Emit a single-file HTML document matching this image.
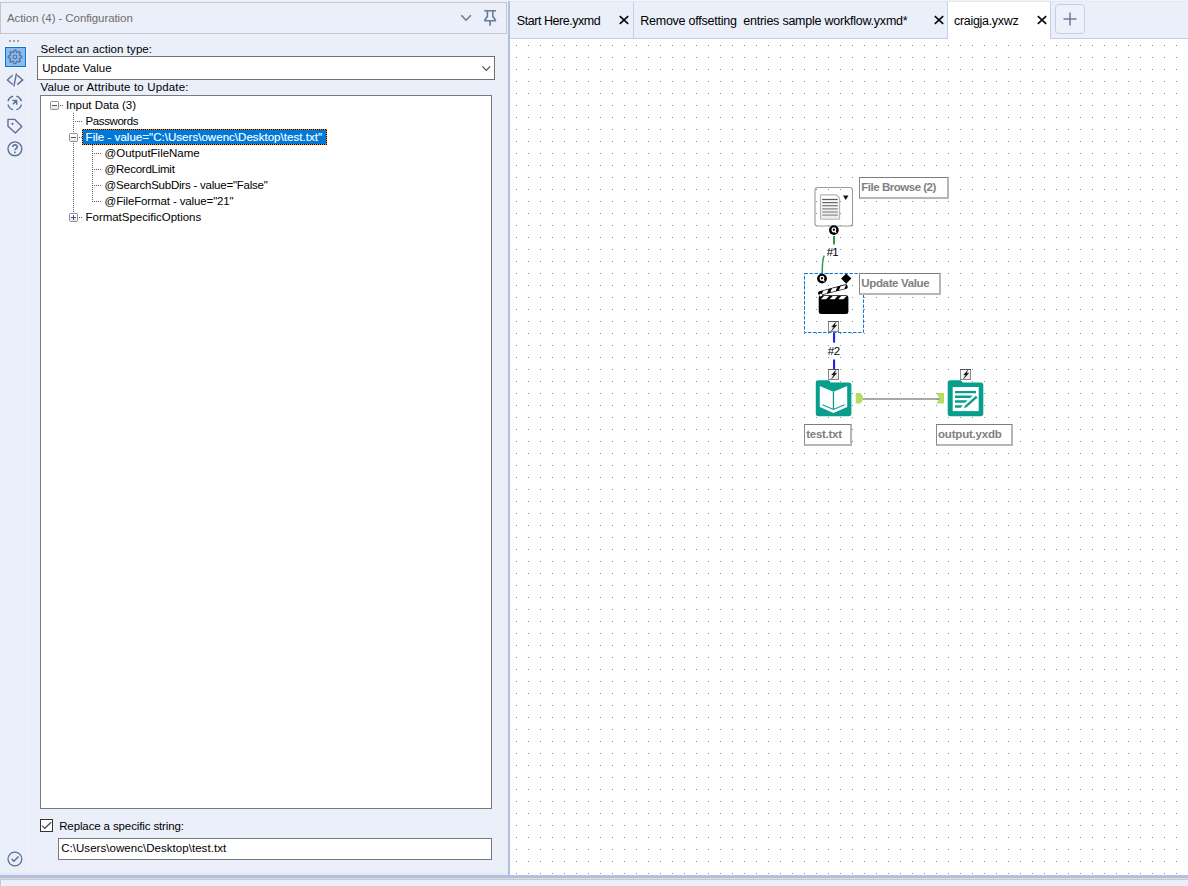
<!DOCTYPE html>
<html><head><meta charset="utf-8"><title>Alteryx</title><style>
html,body{margin:0;padding:0}
body{width:1188px;height:886px;position:relative;overflow:hidden;background:#ebeffa;font-family:'Liberation Sans',sans-serif;}
.a{position:absolute;box-sizing:border-box}
.t{position:absolute;white-space:pre;line-height:16px;height:16px;font-family:'Liberation Sans',sans-serif}
svg{position:absolute;overflow:visible}
</style></head><body>
<div class="a" style="left:0px;top:0px;width:1188px;height:1px;background:#f0f2f8"></div>
<div class="a" style="left:0px;top:2px;width:507px;height:32px;border:1px solid #c6c6c6;border-right-color:#c6c6c6;background:#ebeffa"></div>
<div class="t" style="left:7.00px;top:10.02px;font-size:11.5px;font-weight:400;color:#6d6d6d;letter-spacing:-0.082px;">Action (4) - Configuration</div>
<div class="a" style="left:27px;top:40px;width:1px;height:831px;background:#f3f5fb"></div>
<div class="a" style="left:5px;top:47px;width:21px;height:20px;border:1px solid #0078d7;background:#88bdee"></div>
<div class="a" style="left:9px;top:40px;width:2px;height:2px;background:#a3a3a3"></div>
<div class="a" style="left:13px;top:40px;width:2px;height:2px;background:#a3a3a3"></div>
<div class="a" style="left:17px;top:40px;width:2px;height:2px;background:#a3a3a3"></div>
<div class="t" style="left:40.60px;top:41.02px;font-size:11.5px;font-weight:400;color:#000;letter-spacing:0.070px;">Select an action type:</div>
<div class="a" style="left:37px;top:56px;width:458px;height:24px;border:1px solid #707070;background:#fff"></div>
<div class="t" style="left:42.20px;top:60.02px;font-size:11.5px;font-weight:400;color:#000;letter-spacing:0.055px;">Update Value</div>
<div class="t" style="left:40.60px;top:79.02px;font-size:11.5px;font-weight:400;color:#000;letter-spacing:0.150px;">Value or Attribute to Update:</div>
<div class="a" style="left:40px;top:95px;width:452px;height:714px;border:1px solid #7a7a7a;background:#fff"></div>
<div class="a" style="left:82px;top:129px;width:245px;height:16px;background:#0078d7"></div>
<div class="a" style="left:82px;top:129px;width:245px;height:1px;background:repeating-linear-gradient(to right,#ff8a2a 0 1px,#000 1px 2px)"></div>
<div class="a" style="left:82px;top:144px;width:245px;height:1px;background:repeating-linear-gradient(to right,#000 0 1px,#ff8a2a 1px 2px)"></div>
<div class="a" style="left:82px;top:129px;width:1px;height:16px;background:repeating-linear-gradient(to bottom,#ff8a2a 0 1px,#000 1px 2px)"></div>
<div class="a" style="left:326px;top:129px;width:1px;height:16px;background:repeating-linear-gradient(to bottom,#ff8a2a 0 1px,#000 1px 2px)"></div>
<div class="t" style="left:66.00px;top:97.02px;font-size:11.5px;font-weight:400;color:#000;letter-spacing:-0.023px;">Input Data (3)</div>
<div class="t" style="left:85.60px;top:113.02px;font-size:11.5px;font-weight:400;color:#000;letter-spacing:-0.417px;">Passwords</div>
<div class="t" style="left:85.60px;top:129.02px;font-size:11.5px;font-weight:400;color:#fff;letter-spacing:0.038px;-webkit-text-stroke:0.12px #fff;">File - value=&quot;C:\Users\owenc\Desktop\test.txt&quot;</div>
<div class="t" style="left:104.60px;top:145.02px;font-size:11.5px;font-weight:400;color:#000;letter-spacing:-0.027px;">@OutputFileName</div>
<div class="t" style="left:104.60px;top:161.02px;font-size:11.5px;font-weight:400;color:#000;letter-spacing:-0.253px;">@RecordLimit</div>
<div class="t" style="left:104.60px;top:177.02px;font-size:11.5px;font-weight:400;color:#000;letter-spacing:-0.224px;">@SearchSubDirs - value=&quot;False&quot;</div>
<div class="t" style="left:104.60px;top:193.02px;font-size:11.5px;font-weight:400;color:#000;letter-spacing:-0.126px;">@FileFormat - value=&quot;21&quot;</div>
<div class="t" style="left:85.60px;top:209.02px;font-size:11.5px;font-weight:400;color:#000;letter-spacing:-0.039px;">FormatSpecificOptions</div>
<div class="a" style="left:60px;top:105px;width:3px;height:1px;background:repeating-linear-gradient(to right,#5e5e5e 0 1px,transparent 1px 2px)"></div>
<div class="a" style="left:73px;top:113px;width:1px;height:19px;background:repeating-linear-gradient(to bottom,#5e5e5e 0 1px,transparent 1px 2px)"></div>
<div class="a" style="left:73px;top:143px;width:1px;height:69px;background:repeating-linear-gradient(to bottom,#5e5e5e 0 1px,transparent 1px 2px)"></div>
<div class="a" style="left:73px;top:121px;width:9px;height:1px;background:repeating-linear-gradient(to right,#5e5e5e 0 1px,transparent 1px 2px)"></div>
<div class="a" style="left:79px;top:137px;width:3px;height:1px;background:repeating-linear-gradient(to right,#5e5e5e 0 1px,transparent 1px 2px)"></div>
<div class="a" style="left:79px;top:217px;width:3px;height:1px;background:repeating-linear-gradient(to right,#5e5e5e 0 1px,transparent 1px 2px)"></div>
<div class="a" style="left:92px;top:145px;width:1px;height:57px;background:repeating-linear-gradient(to bottom,#5e5e5e 0 1px,transparent 1px 2px)"></div>
<div class="a" style="left:92px;top:153px;width:9px;height:1px;background:repeating-linear-gradient(to right,#5e5e5e 0 1px,transparent 1px 2px)"></div>
<div class="a" style="left:92px;top:169px;width:9px;height:1px;background:repeating-linear-gradient(to right,#5e5e5e 0 1px,transparent 1px 2px)"></div>
<div class="a" style="left:92px;top:185px;width:9px;height:1px;background:repeating-linear-gradient(to right,#5e5e5e 0 1px,transparent 1px 2px)"></div>
<div class="a" style="left:92px;top:201px;width:9px;height:1px;background:repeating-linear-gradient(to right,#5e5e5e 0 1px,transparent 1px 2px)"></div>
<div class="a" style="left:50px;top:101px;width:9px;height:9px;border:1px solid #919191;border-radius:1.5px;background:linear-gradient(to bottom,#fff 0%,#fbfbfb 45%,#e4e2dc 100%)"></div><div class="a" style="left:52px;top:105px;width:5px;height:1px;background:#3f50a6"></div>
<div class="a" style="left:69px;top:133px;width:9px;height:9px;border:1px solid #919191;border-radius:1.5px;background:linear-gradient(to bottom,#fff 0%,#fbfbfb 45%,#e4e2dc 100%)"></div><div class="a" style="left:71px;top:137px;width:5px;height:1px;background:#3f50a6"></div>
<div class="a" style="left:69px;top:213px;width:9px;height:9px;border:1px solid #919191;border-radius:1.5px;background:linear-gradient(to bottom,#fff 0%,#fbfbfb 45%,#e4e2dc 100%)"></div><div class="a" style="left:71px;top:217px;width:5px;height:1px;background:#3f50a6"></div><div class="a" style="left:73px;top:215px;width:1px;height:5px;background:#3f50a6"></div>
<div class="a" style="left:40px;top:819px;width:13px;height:13px;border:1px solid #333;background:#fff"></div>
<svg class="a" style="left:40px;top:819px" width="13" height="13"><path d="M2.2 6.6 L4.8 9.3 L11.2 3.2" fill="none" stroke="#4a4a4a" stroke-width="1.2"/></svg>
<div class="t" style="left:59.20px;top:818.02px;font-size:11.5px;font-weight:400;color:#000;letter-spacing:-0.121px;">Replace a specific string:</div>
<div class="a" style="left:58px;top:838px;width:434px;height:22px;border:1px solid #7a7a7a;background:#fff"></div>
<div class="t" style="left:61.20px;top:840.02px;font-size:11.5px;font-weight:400;color:#000;letter-spacing:0.044px;">C:\Users\owenc\Desktop\test.txt</div>
<svg class="a" style="left:0;top:0" width="1188" height="886" ><rect x="4.5" y="46.5" width="22" height="21" fill="none" stroke="#f4f6fb" stroke-width="1"/><path d="M15.00 50.13 L15.27 50.14 L15.53 50.15 L15.80 50.18 L16.00 50.59 L16.14 51.16 L16.24 51.74 L16.34 52.16 L16.52 52.21 L16.71 52.27 L16.89 52.35 L17.06 52.42 L17.24 52.51 L17.41 52.60 L17.77 52.37 L18.25 52.04 L18.76 51.73 L19.19 51.58 L19.40 51.75 L19.60 51.93 L19.79 52.11 L19.97 52.30 L20.15 52.50 L20.32 52.71 L20.17 53.14 L19.86 53.65 L19.53 54.13 L19.30 54.49 L19.39 54.66 L19.48 54.84 L19.55 55.01 L19.63 55.19 L19.69 55.38 L19.74 55.56 L20.16 55.66 L20.74 55.76 L21.31 55.90 L21.72 56.10 L21.75 56.37 L21.76 56.63 L21.77 56.90 L21.76 57.17 L21.75 57.43 L21.72 57.70 L21.31 57.90 L20.74 58.04 L20.16 58.14 L19.74 58.24 L19.69 58.42 L19.63 58.61 L19.55 58.79 L19.48 58.96 L19.39 59.14 L19.30 59.31 L19.53 59.67 L19.86 60.15 L20.17 60.66 L20.32 61.09 L20.15 61.30 L19.97 61.50 L19.79 61.69 L19.60 61.87 L19.40 62.05 L19.19 62.22 L18.76 62.07 L18.25 61.76 L17.77 61.43 L17.41 61.20 L17.24 61.29 L17.06 61.38 L16.89 61.45 L16.71 61.53 L16.52 61.59 L16.34 61.64 L16.24 62.06 L16.14 62.64 L16.00 63.21 L15.80 63.62 L15.53 63.65 L15.27 63.66 L15.00 63.67 L14.73 63.66 L14.47 63.65 L14.20 63.62 L14.00 63.21 L13.86 62.64 L13.76 62.06 L13.66 61.64 L13.48 61.59 L13.29 61.53 L13.11 61.45 L12.94 61.38 L12.76 61.29 L12.59 61.20 L12.23 61.43 L11.75 61.76 L11.24 62.07 L10.81 62.22 L10.60 62.05 L10.40 61.87 L10.21 61.69 L10.03 61.50 L9.85 61.30 L9.68 61.09 L9.83 60.66 L10.14 60.15 L10.47 59.67 L10.70 59.31 L10.61 59.14 L10.52 58.96 L10.45 58.79 L10.37 58.61 L10.31 58.42 L10.26 58.24 L9.84 58.14 L9.26 58.04 L8.69 57.90 L8.28 57.70 L8.25 57.43 L8.24 57.17 L8.23 56.90 L8.24 56.63 L8.25 56.37 L8.28 56.10 L8.69 55.90 L9.26 55.76 L9.84 55.66 L10.26 55.56 L10.31 55.38 L10.37 55.19 L10.45 55.01 L10.52 54.84 L10.61 54.66 L10.70 54.49 L10.47 54.13 L10.14 53.65 L9.83 53.14 L9.68 52.71 L9.85 52.50 L10.03 52.30 L10.21 52.11 L10.40 51.93 L10.60 51.75 L10.81 51.58 L11.24 51.73 L11.75 52.04 L12.23 52.37 L12.59 52.60 L12.76 52.51 L12.94 52.42 L13.11 52.35 L13.29 52.27 L13.48 52.21 L13.66 52.16 L13.76 51.74 L13.86 51.16 L14.00 50.59 L14.20 50.18 L14.47 50.15 L14.73 50.14 Z" fill="none" stroke="#58709c" stroke-width="1.25" stroke-linejoin="round"/><circle cx="15.0" cy="56.9" r="1.9" fill="none" stroke="#58709c" stroke-width="1.15"/><path d="M12.7 75.3 L7.4 79.9 L12.7 84.6 M17.3 75.3 L22.7 79.9 L17.3 84.6 M16.5 73.4 L13.8 86.5" fill="none" stroke="#5d6f97" stroke-width="1.4"/><path d="M16.37 96.20 A6.9 6.9 0 0 1 21.40 101.23 M21.40 104.57 A6.9 6.9 0 0 1 16.37 109.60 M13.03 109.60 A6.9 6.9 0 0 1 8.00 104.57 M8.00 101.23 A6.9 6.9 0 0 1 13.03 96.20" fill="none" stroke="#5d6f97" stroke-width="1.4"/><path d="M12.4 100.5 H16.6 V104.8 M16.4 100.7 L12.9 104.3" fill="none" stroke="#5d6f97" stroke-width="1.4"/><path d="M8 119.4 H14.8 L21.8 126.6 L15.4 133.0 L8 126.2 Z" fill="none" stroke="#5d6f97" stroke-width="1.4" stroke-linejoin="round"/><circle cx="12.5" cy="123.8" r="1.15" fill="#5d6f97"/><circle cx="14.9" cy="148.8" r="6.9" fill="none" stroke="#5d6f97" stroke-width="1.4"/><path d="M12.7 146.9 C12.7 144.2 17.3 144.3 17.2 146.9 C17.2 148.6 14.95 148.5 14.95 150.3" fill="none" stroke="#5d6f97" stroke-width="1.6"/><rect x="14.15" y="151.6" width="1.6" height="1.6" fill="#5d6f97"/><circle cx="14.9" cy="859.0" r="6.9" fill="none" stroke="#5d6f97" stroke-width="1.3"/><path d="M11.6 859.0 L13.9 861.3 L18.5 856.5" fill="none" stroke="#5d6f97" stroke-width="1.5"/><path d="M461.3 15.3 L466.1 20.2 L470.9 15.3" fill="none" stroke="#6a7998" stroke-width="1.6"/><path d="M484.2 10.8 H496 M487.4 11 V16.2 L484.8 20.3 V20.8 H495.4 V20.3 L492.8 16.2 V11 M490.1 21 V25.8" fill="none" stroke="#6a7998" stroke-width="1.6" stroke-linejoin="round"/><path d="M482.4 66.4 L486.3 70.4 L490.2 66.4" fill="none" stroke="#4d4d4d" stroke-width="1.15"/></svg>
<div class="a" style="left:508px;top:1px;width:2px;height:875px;background:#afc0e4"></div>
<div class="a" style="left:0px;top:873px;width:508px;height:2px;background:#e8eaee"></div>
<div class="a" style="left:507px;top:34px;width:1px;height:841px;background:#e9ebf1"></div>
<div class="a" style="left:0px;top:875px;width:1188px;height:3px;background:#afc0e4"></div>
<div class="a" style="left:0px;top:878px;width:1188px;height:1px;background:#dedede"></div>
<div class="a" style="left:0px;top:879px;width:1188px;height:7px;background:#ebeffa;border-top:1px solid #c8c8c8;border-left:1px solid #c9c9c9"></div>
<div class="a" style="left:510px;top:1px;width:678px;height:1px;background:#e6e8ee"></div>
<div class="a" style="left:510px;top:38px;width:678px;height:1px;background:#c3cfea"></div>
<div class="a" style="left:633px;top:2px;width:1px;height:36px;background:#c3cfea"></div>
<div class="a" style="left:947px;top:2px;width:1px;height:36px;background:#c3cfea"></div>
<div class="a" style="left:510px;top:39px;width:678px;height:836px;background-color:#fff;background-image:radial-gradient(circle at 0.5px 0.5px,#8a8a8a 0.55px,transparent 0.8px);background-size:12px 12px;background-position:6px 6px"></div>
<div class="a" style="left:948px;top:2px;width:103px;height:38px;background:#fff"></div>
<div class="a" style="left:1050px;top:2px;width:1px;height:37px;background:#c3cfea"></div>
<div class="t" style="left:516.80px;top:12.67px;font-size:12.5px;font-weight:400;color:#000;letter-spacing:-0.454px;">Start Here.yxmd</div>
<div class="t" style="left:640.20px;top:12.67px;font-size:12.5px;font-weight:400;color:#000;letter-spacing:-0.232px;">Remove offsetting  entries sample workflow.yxmd*</div>
<div class="t" style="left:954.00px;top:12.67px;font-size:12.5px;font-weight:400;color:#000;letter-spacing:-0.307px;">craigja.yxwz</div>
<svg class="a" style="left:619.3px;top:15.2px" width="10" height="10"><path d="M0.8 1.2 L9.2 8.8 M9.2 1.2 L0.8 8.8" stroke="#0a0a0a" stroke-width="1.7" fill="none"/></svg>
<svg class="a" style="left:933.5px;top:15.2px" width="10" height="10"><path d="M0.8 1.2 L9.2 8.8 M9.2 1.2 L0.8 8.8" stroke="#0a0a0a" stroke-width="1.7" fill="none"/></svg>
<svg class="a" style="left:1036.6px;top:15.2px" width="10" height="10"><path d="M0.8 1.2 L9.2 8.8 M9.2 1.2 L0.8 8.8" stroke="#0a0a0a" stroke-width="1.7" fill="none"/></svg>
<div class="a" style="left:1055px;top:4px;width:30px;height:30px;border:1px solid #c3cfea;border-radius:4px;background:#edf1fb"></div>
<svg class="a" style="left:1063px;top:12px" width="14" height="14"><path d="M7 0.5 V13.5 M0.5 7 H13.5" stroke="#6f7c99" stroke-width="1.5"/></svg>
<svg class="a" style="left:0;top:0" width="1188" height="886"><rect x="833" y="236" width="2" height="8.5" fill="#2a9d4c"/><path d="M824.3 255.6 C822.6 258 822.3 262 822.2 273.4" fill="none" stroke="#2a9d4c" stroke-width="1.5"/><rect x="833" y="332.6" width="2.1" height="10" fill="#2222f2"/><rect x="833" y="359.5" width="2.1" height="10" fill="#2222f2"/><rect x="862.5" y="398" width="76" height="2" fill="#a9a9a9"/><rect x="815" y="187.5" width="37.5" height="38.5" rx="2.8" fill="none" stroke="#9c9c9c" stroke-width="1.1"/><defs><linearGradient id="pg" x1="0" y1="0" x2="0" y2="1"><stop offset="0" stop-color="#ffffff"/><stop offset="1" stop-color="#ececec"/></linearGradient><linearGradient id="lb" x1="0" y1="0" x2="1" y2="1"><stop offset="0" stop-color="#ffffff"/><stop offset="1" stop-color="#e6e6e6"/></linearGradient></defs><path d="M821.2 194.9 H836.6 L839.6 198.2 V218.2 Q839.6 219.2 838.6 219.2 H821.2 Q820.5 219.2 820.5 218.4 V195.6 Q820.5 194.9 821.2 194.9 Z" fill="url(#pg)" stroke="#b4b4b4" stroke-width="1.1"/><rect x="822.2" y="198.9" width="15.6" height="1.2" fill="#5a5a5a"/><rect x="822.2" y="202.0" width="15.6" height="1.2" fill="#666"/><rect x="822.2" y="205.1" width="15.6" height="1.2" fill="#757575"/><rect x="822.2" y="208.3" width="15.6" height="1.2" fill="#808080"/><rect x="822.2" y="211.4" width="15.6" height="1.2" fill="#858585"/><rect x="822.2" y="214.5" width="15.6" height="1.2" fill="#8a8a8a"/><path d="M843 195.4 H848.5 L845.75 200 Z" fill="#111"/><circle cx="833.9" cy="230.1" r="4.9" fill="#000"/><ellipse cx="833.9" cy="229.85" rx="1.75" ry="1.9" fill="none" stroke="#fff" stroke-width="1.3"/><path d="M834.4 231.0 L836.3 232.79999999999998" stroke="#fff" stroke-width="1.15"/><rect x="804.5" y="273.5" width="59" height="59" fill="none" stroke="#0b74da" stroke-width="1" stroke-dasharray="3.4 1.6"/><circle cx="822.0" cy="278.6" r="4.9" fill="#000"/><ellipse cx="822.0" cy="278.35" rx="1.75" ry="1.9" fill="none" stroke="#fff" stroke-width="1.3"/><path d="M822.5 279.5 L824.4 281.3" stroke="#fff" stroke-width="1.15"/><path d="M846.2 273.5 L851.3 278.6 L846.2 283.7 L841.1 278.6 Z" fill="#000"/><rect x="818.7" y="295.3" width="29.7" height="18.8" rx="2.4" fill="#000"/><path d="M820.9 299.3 L826.0 299.3 L829.2 296.1 L824.0 296.1 Z" fill="#fff"/><path d="M829.6 299.3 L834.7 299.3 L837.6 296.1 L832.8 296.1 Z" fill="#fff"/><path d="M838.3 299.3 L843.4 299.3 L846.6 296.1 L841.2 296.1 Z" fill="#fff"/><g transform="translate(0 1.3) rotate(-14.6 820.8 294.2)"><rect x="818.8" y="289.6" width="30.2" height="4.6" rx="1.6" fill="#000"/><path d="M821.8 293.5 L827.3 293.5 L829.8 290.3 L824.3 290.3 Z M830.8 293.5 L836.3 293.5 L838.8 290.3 L833.3 290.3 Z M839.8 293.5 L845.3 293.5 L847.8 290.3 L842.3 290.3 Z" fill="#fff"/></g><circle cx="820.7" cy="295.1" r="1.4" fill="#fff"/><rect x="828.5" y="321.5" width="10" height="10" fill="url(#lb)" stroke="#8a8a8a" stroke-width="1"/><path d="M828 321.5 H839" stroke="#555" stroke-width="1"/><path d="M835.7 322.2 L831.7 327.0 L834.0 326.7 L831.5 330.9 L836.8 325.1 L834.4 325.5 Z" fill="#000" stroke="#000" stroke-width="0.35"/><rect x="828.5" y="369.5" width="10" height="10" fill="url(#lb)" stroke="#8a8a8a" stroke-width="1"/><path d="M828 369.5 H839" stroke="#555" stroke-width="1"/><path d="M835.7 370.2 L831.7 375.0 L834.0 374.7 L831.5 378.9 L836.8 373.1 L834.4 373.5 Z" fill="#000" stroke="#000" stroke-width="0.35"/><rect x="960.5" y="369.5" width="10" height="10" fill="url(#lb)" stroke="#8a8a8a" stroke-width="1"/><path d="M960 369.5 H971" stroke="#555" stroke-width="1"/><path d="M967.7 370.2 L963.7 375.0 L966.0 374.7 L963.5 378.9 L968.8 373.1 L966.4 373.5 Z" fill="#000" stroke="#000" stroke-width="0.35"/><path d="M818.4 380.3 H828.4 Q829.4 380.3 830.0 381.4 Q830.5999999999999 382.6 831.5999999999999 382.6 H848.6999999999999 Q851.4 382.6 851.4 385.3 V413.5 Q851.4 416.2 848.6999999999999 416.2 H818.5 Q815.8 416.2 815.8 413.5 V383 Q815.8 380.3 818.4 380.3 Z" fill="#079e8c"/><path d="M819.8 386 L833.4 391.8 L847.2 386 V407 L833.4 413.1 L819.8 407 Z" fill="#fff"/><rect x="832.8" y="391.6" width="1.3" height="18" fill="#079e8c"/><path d="M822.5 404.7 L833.45 409.5 L844.5 404.7" fill="none" stroke="#079e8c" stroke-width="1.1"/><path d="M855.7 393.1 H859.6 Q860.6 393.1 861.3 394.1 L862.5 396 Q862.9 396.6 862.9 397.4 V399.3 Q862.9 400 862.5 400.6 L861.3 402.5 Q860.6 403.5 859.6 403.5 H855.7 Z" fill="#b6dc64"/><path d="M950.3000000000001 380.3 H960.3000000000001 Q961.3000000000001 380.3 961.9000000000001 381.4 Q962.5 382.6 963.5 382.6 H980.6 Q983.3000000000001 382.6 983.3000000000001 385.3 V413.5 Q983.3000000000001 416.2 980.6 416.2 H950.4000000000001 Q947.7 416.2 947.7 413.5 V383 Q947.7 380.3 950.3000000000001 380.3 Z" fill="#079e8c"/><rect x="952.7" y="387" width="26" height="24.1" fill="#fff"/><path d="M955 390.9 H976 V393.3 H955 Z M955 395.6 H972.7 L970.1 398 H955 Z M955 400.3 H967.6 L965.0 402.7 H955 Z M955 405.3 H962.6 L960.8 407.7 H955 Z" fill="#079e8c"/><path d="M975.9 395.8 L977.6 397.4 L966.6 407.3 L964.0 407.9 L964.9 405.7 Z" fill="#079e8c"/><path d="M936.4 393.1 H944 V403.6 H936.4 L939.3 398.4 Z" fill="#b6dc64"/><rect x="936.5" y="398" width="3" height="2" fill="#9a9a9a"/></svg>
<div class="a" style="left:859px;top:177px;width:90px;height:22px;background:#fff;border-top:1px solid #7c7c7c;border-left:1px solid #8a8a8a;border-right:2px solid #b6b6b6;border-bottom:2px solid #b6b6b6"></div>
<div class="t" style="left:861.30px;top:179.02px;font-size:11.5px;font-weight:700;color:#7f7f7f;letter-spacing:-0.481px;">File Browse (2)</div>
<div class="a" style="left:859px;top:273px;width:82px;height:22px;background:#fff;border-top:1px solid #7c7c7c;border-left:1px solid #8a8a8a;border-right:2px solid #b6b6b6;border-bottom:2px solid #b6b6b6"></div>
<div class="t" style="left:861.30px;top:275.02px;font-size:11.5px;font-weight:700;color:#7f7f7f;letter-spacing:-0.352px;">Update Value</div>
<div class="a" style="left:804px;top:424px;width:48px;height:22px;background:#fff;border-top:1px solid #7c7c7c;border-left:1px solid #8a8a8a;border-right:2px solid #b6b6b6;border-bottom:2px solid #b6b6b6"></div>
<div class="t" style="left:806.20px;top:426.02px;font-size:11.5px;font-weight:700;color:#7f7f7f;letter-spacing:-0.263px;">test.txt</div>
<div class="a" style="left:936px;top:424px;width:77px;height:22px;background:#fff;border-top:1px solid #7c7c7c;border-left:1px solid #8a8a8a;border-right:2px solid #b6b6b6;border-bottom:2px solid #b6b6b6"></div>
<div class="t" style="left:938.00px;top:426.02px;font-size:11.5px;font-weight:700;color:#7f7f7f;letter-spacing:-0.191px;">output.yxdb</div>
<div class="t" style="left:826.80px;top:244.02px;font-size:11.5px;font-weight:400;color:#000;letter-spacing:-0.898px;">#1</div>
<div class="t" style="left:827.80px;top:343.02px;font-size:11.5px;font-weight:400;color:#000;letter-spacing:-0.548px;">#2</div>
</body></html>
